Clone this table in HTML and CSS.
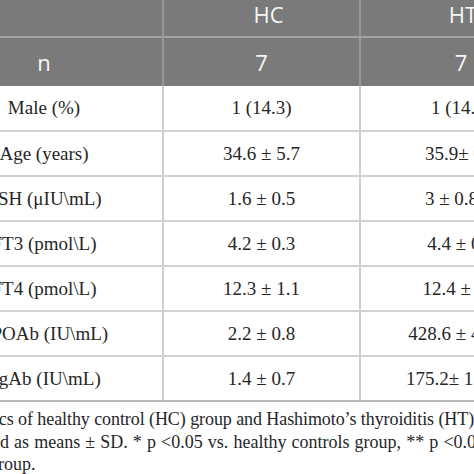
FILE: index.html
```html
<!DOCTYPE html>
<html lang="en">
<head>
<meta charset="utf-8">
<title>Table</title>
<link rel="stylesheet" href="styles.css">
</head>
<body>
<div class="frame">
  <table class="data">
    <colgroup>
      <col class="c1"><col class="c2"><col class="c3">
    </colgroup>
    <thead>
      <tr class="h1">
        <th></th>
        <th class="hc">HC</th>
        <th class="ht">HT</th>
      </tr>
      <tr class="h2">
        <th>n</th>
        <th>7</th>
        <th>7</th>
      </tr>
    </thead>
    <tbody>
      <tr><td>Male (%)</td><td>1 (14.3)</td><td>1 (14.3)</td></tr>
      <tr><td>Age (years)</td><td>34.6 ± 5.7</td><td>35.9± 6.6</td></tr>
      <tr><td>TSH (μIU\mL)</td><td>1.6 ± 0.5</td><td>3 ± 0.8**</td></tr>
      <tr><td>FT3 (pmol\L)</td><td>4.2 ± 0.3</td><td>4.4 ± 0.6</td></tr>
      <tr><td>FT4 (pmol\L)</td><td>12.3 ± 1.1</td><td>12.4 ± 1.3</td></tr>
      <tr><td>TPOAb (IU\mL)</td><td>2.2 ± 0.8</td><td>428.6 ± 456.2</td></tr>
      <tr class="last"><td>TgAb (IU\mL)</td><td>1.4 ± 0.7</td><td>175.2± 128.6*</td></tr>
    </tbody>
  </table>
  <div class="note">
    <div class="line l1">tics of healthy control (HC) group and Hashimoto’s thyroiditis (HT) group. Data are</div>
    <div class="line l2">ted as means ± SD. * p &lt;0.05 vs. healthy controls group, ** p &lt;0.01 vs.</div>
    <div class="line l3">group.</div>
  </div>
</div>
</body>
</html>
```
FILE: styles.css
```css
html, body {
  margin: 0;
  padding: 0;
  background: #ffffff;
  overflow: hidden;
}
.frame {
  width: 474px;
  height: 474px;
  overflow: hidden;
  position: relative;
}
.data {
  border-collapse: collapse;
  table-layout: fixed;
  width: 637px;
  margin-left: -76px;
  margin-top: -9px;
}
.c1 { width: 238px; }
.c2 { width: 197px; }
.c3 { width: 202px; }

.data th {
  background: #7a7a7a;
  color: #f7f7f7;
  font-family: "Open Sans", "Noto Sans", sans-serif;
  font-weight: normal;
  font-size: 22px;
  padding: 0;
  text-align: center;
  border-left: 2px solid #979797;
  border-right: 2px solid #979797;
}
.data tr.h1 th {
  height: 46px;
  border-bottom: 2px solid #a2a2a2;
  box-sizing: border-box;
}
.data tr.h2 th {
  height: 49px;
  box-sizing: border-box;
}
.data th.hc { padding-left: 14px; }
.data th.ht { padding-left: 4px; }

.data td {
  font-family: "Liberation Serif", "Times New Roman", serif;
  font-size: 19px;
  color: #262626;
  text-align: center;
  padding: 0;
  height: 45px;
  box-sizing: border-box;
  border-bottom: 2px solid #d2d2d2;
  border-left: 2px solid #cdcdcd;
  border-right: 2px solid #cdcdcd;
  white-space: nowrap;
}
.data tr.last td {
  border-bottom: 2px solid #b9b9b9;
}

.note {
  margin-top: 6px;
  margin-left: -11px;
  font-family: "Liberation Serif", "Times New Roman", serif;
  font-size: 18px;
  line-height: 22.5px;
  color: #262626;
  white-space: nowrap;
}
.l1 { letter-spacing: -0.08px; }
.l2 { word-spacing: 0.6px; text-indent: -2px; }
```
